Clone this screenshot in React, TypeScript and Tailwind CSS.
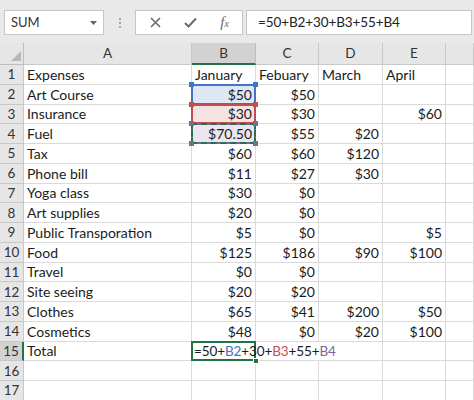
import React from "react";

type Row = { n: number; a: string; b?: string; c?: string; d?: string; e?: string };

const rows: Row[] = [
  { n: 1, a: "Expenses", b: "January", c: "Febuary", d: "March", e: "April" },
  { n: 2, a: "Art Course", b: "$50", c: "$50" },
  { n: 3, a: "Insurance", b: "$30", c: "$30", e: "$60" },
  { n: 4, a: "Fuel", b: "$70.50", c: "$55", d: "$20" },
  { n: 5, a: "Tax", b: "$60", c: "$60", d: "$120" },
  { n: 6, a: "Phone bill", b: "$11", c: "$27", d: "$30" },
  { n: 7, a: "Yoga class", b: "$30", c: "$0" },
  { n: 8, a: "Art supplies", b: "$20", c: "$0" },
  { n: 9, a: "Public Transporation", b: "$5", c: "$0", e: "$5" },
  { n: 10, a: "Food", b: "$125", c: "$186", d: "$90", e: "$100" },
  { n: 11, a: "Travel", b: "$0", c: "$0" },
  { n: 12, a: "Site seeing", b: "$20", c: "$20" },
  { n: 13, a: "Clothes", b: "$65", c: "$41", d: "$200", e: "$50" },
  { n: 14, a: "Cosmetics", b: "$48", c: "$0", d: "$20", e: "$100" },
  { n: 15, a: "Total" },
  { n: 16, a: "" },
  { n: 17, a: "" },
];

const Formula = () => (
  <span className="whitespace-nowrap text-[13.5px] tracking-[-0.1px]">
    =50+<span className="text-[#4472c4]">B2</span>+30+
    <span className="text-[#c0504d]">B3</span>+55+
    <span className="text-[#8064a2]">B4</span>
  </span>
);

const Handle = ({ color, pos }: { color: string; pos: string }) => (
  <div className={`absolute w-[5px] h-[5px] ${color} ${pos}`} />
);

const gridCell = "border-r border-b border-[#dadada] h-[19.75px] px-[3px] flex items-center";

const App: React.FC = () => {
  return (
    <div className="w-[474px] h-[400px] overflow-hidden bg-white font-['Lato',sans-serif] text-[14px] text-[#1b1b1b]">
      {/* Toolbar */}
      <div className="h-[43px] bg-[#e9e9e9] flex items-start pt-[10px] pl-[4px]">
        <div className="w-[100px] h-[25px] bg-white border border-[#c6c6c6] flex items-center justify-between pl-[6px] pr-[6px] text-[13px] text-[#333]">
          <span>SUM</span>
          <svg width="7" height="4" viewBox="0 0 7 4">
            <path d="M0 0 L7 0 L3.5 4 Z" fill="#666" />
          </svg>
        </div>
        <div className="w-[31px] h-[25px] flex flex-col items-center justify-center gap-[2px]">
          <div className="w-[2px] h-[2px] bg-[#a8a8a8]" />
          <div className="w-[2px] h-[2px] bg-[#a8a8a8]" />
          <div className="w-[2px] h-[2px] bg-[#a8a8a8]" />
        </div>
        <div className="w-[108px] h-[25px] bg-white border border-[#c6c6c6] flex items-center">
          <div className="w-[36px] flex justify-center ml-[2px]">
            <svg width="11" height="11" viewBox="0 0 11 11">
              <path d="M1 1 L10 10 M10 1 L1 10" stroke="#6b6b6b" strokeWidth="1.6" />
            </svg>
          </div>
          <div className="w-[36px] flex justify-center">
            <svg width="13" height="11" viewBox="0 0 13 11">
              <path d="M1 6 L4.5 9.5 L12 1.5" stroke="#6b6b6b" strokeWidth="2" fill="none" />
            </svg>
          </div>
          <div className="w-[36px] flex justify-center font-['Liberation_Serif',serif] italic text-[15px] text-[#6b6b6b] leading-none">
            f<span className="text-[10px] mt-[4px]">x</span>
          </div>
        </div>
        <div className="ml-[3px] w-[226px] h-[25px] bg-white border border-[#c6c6c6] flex items-center pl-[11px] text-[13.5px] text-[#222]">
          <span className="whitespace-nowrap tracking-[-0.1px]">=50+B2+30+B3+55+B4</span>
        </div>
      </div>

      {/* Sheet */}
      <div className="grid grid-cols-[24px_168px_64px_63px_64px_63px_1fr]">
        {/* Column headers */}
        <div className="h-[22px] bg-[#e6e6e6] border-r border-b border-[#bdbdbd] relative">
          <svg className="absolute right-[2px] bottom-[3px]" width="10" height="10" viewBox="0 0 10 10">
            <path d="M10 0 L10 10 L0 10 Z" fill="#b7b7b7" />
          </svg>
        </div>
        {["A", "B", "C", "D", "E", ""].map((l) => (
          <div
            key={l || "F"}
            className={
              l === "B"
                ? "h-[22px] bg-[#d2d2d2] border-r border-[#bdbdbd] border-b-2 border-b-[#217346] flex items-center justify-center text-[13.5px] text-[#333]"
                : "h-[22px] bg-[#e6e6e6] border-r border-b border-[#c8c8c8] flex items-center justify-center text-[13.5px] text-[#333]"
            }
          >
            {l}
          </div>
        ))}

        {rows.map((r) => (
          <React.Fragment key={r.n}>
            <div
              className={
                r.n === 15
                  ? "h-[19.75px] bg-[#d2d2d2] border-b border-[#c8c8c8] border-r-2 border-r-[#217346] flex items-center justify-center text-[13.5px] text-[#333]"
                  : "h-[19.75px] bg-[#e6e6e6] border-r border-b border-[#c8c8c8] flex items-center justify-center text-[13.5px] text-[#333]"
              }
            >
              {r.n}
            </div>
            <div className={gridCell}>
              <span className="whitespace-nowrap">{r.a}</span>
            </div>

            {/* Column B */}
            {r.n === 2 ? (
              <div className={`${gridCell} justify-end relative bg-[#dfe7f5]`}>
                <div className="absolute -top-px -left-px -right-px -bottom-px border-2 border-[#4472c4] z-10" />
                <Handle color="bg-[#4472c4]" pos="-top-[3px] -left-[3px] z-20" />
                <Handle color="bg-[#4472c4]" pos="-top-[3px] -right-[3px] z-20" />
                <span className="relative z-20">{r.b}</span>
              </div>
            ) : r.n === 3 ? (
              <div className={`${gridCell} justify-end relative bg-[#f5e2e2]`}>
                <div className="absolute -top-px -left-px -right-px -bottom-px border-2 border-[#c0504d] z-10" />
                <Handle color="bg-[#c0504d]" pos="-top-[3px] -left-[3px] z-20" />
                <Handle color="bg-[#c0504d]" pos="-top-[3px] -right-[3px] z-20" />
                <span className="relative z-20">{r.b}</span>
              </div>
            ) : r.n === 4 ? (
              <div className={`${gridCell} justify-end relative bg-[#ebe5f2]`}>
                <div className="absolute -top-px -left-px -right-px -bottom-px border-2 border-[#8064a2] z-10" />
                <div className="absolute -top-px -left-px -right-px -bottom-px border-2 border-dashed border-[#217346] z-10" />
                <Handle color="bg-[#8064a2]" pos="-top-[3px] -left-[3px] z-20" />
                <Handle color="bg-[#8064a2]" pos="-top-[3px] -right-[3px] z-20" />
                <Handle color="bg-[#8064a2]" pos="-bottom-[3px] -left-[3px] z-20" />
                <Handle color="bg-[#8064a2]" pos="-bottom-[3px] -right-[3px] z-20" />
                <span className="relative z-20">{r.b}</span>
              </div>
            ) : r.n === 15 ? (
              <div className={`${gridCell} relative overflow-visible`}>
                <div className="absolute -top-px -left-px -right-px -bottom-px border-2 border-[#217346] z-10" />
                <div className="absolute -bottom-[4px] -right-[4px] w-[6px] h-[6px] bg-[#217346] border border-white z-20" />
                <span className="relative z-20 -ml-[1px]">
                  <Formula />
                </span>
              </div>
            ) : (
              <div className={`${gridCell} ${r.n === 1 ? "" : "justify-end"}`}>
                <span className="whitespace-nowrap">{r.b}</span>
              </div>
            )}

            <div className={`${gridCell} ${r.n === 1 ? "" : "justify-end"} ${r.n === 15 ? "border-r-transparent" : ""}`}>
              <span className="whitespace-nowrap">{r.c}</span>
            </div>
            <div className={`${gridCell} ${r.n === 1 ? "" : "justify-end"}`}>
              <span className="whitespace-nowrap">{r.d}</span>
            </div>
            <div className={`${gridCell} ${r.n === 1 ? "" : "justify-end"}`}>
              <span className="whitespace-nowrap">{r.e}</span>
            </div>
            <div className={gridCell} />
          </React.Fragment>
        ))}
      </div>
    </div>
  );
};

export default App;
